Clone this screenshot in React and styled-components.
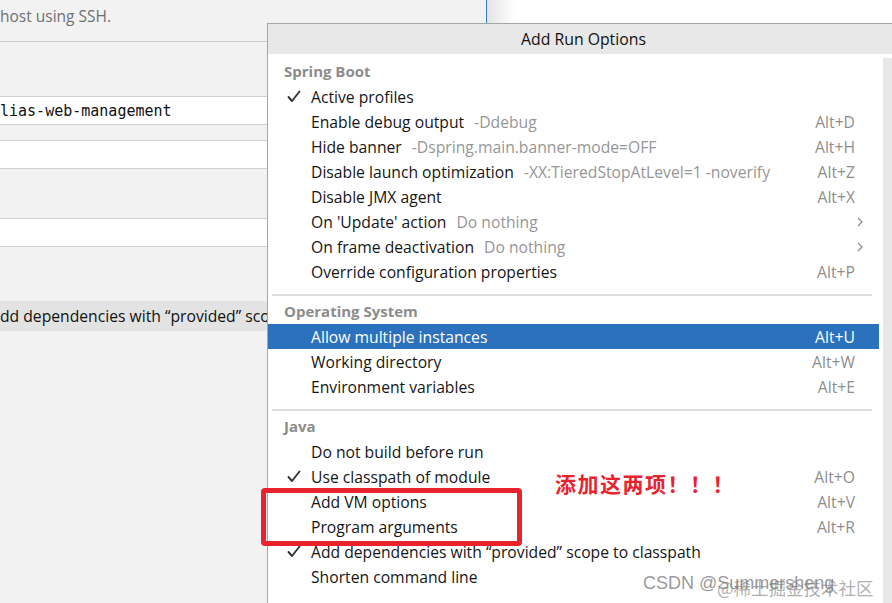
import React from "react";
import styled, { createGlobalStyle } from "styled-components";

const GlobalStyle = createGlobalStyle`
  html, body {
    margin: 0;
    padding: 0;
  }
  body {
    width: 892px;
    height: 603px;
    overflow: hidden;
    font-family: "Open Sans", "Noto Sans CJK SC", sans-serif;
    color: #161616;
  }
`;

const Stage = styled.div`
  position: relative;
  width: 892px;
  height: 603px;
  display: flex;
  overflow: hidden;
`;

const SettingsPanel = styled.div`
  width: 486px;
  flex-shrink: 0;
  background: #f2f2f2;
  border-right: 1px solid #3d7fc4;
  display: flex;
  flex-direction: column;
`;

const Backdrop = styled.div`
  flex: 1;
  background: linear-gradient(to right, #e4e4e4, #ffffff 28px);
`;

const PanelHint = styled.div`
  margin-top: 6px;
  height: 20px;
  line-height: 20px;
  font-size: 15.5px;
  color: #707070;
`;

const PanelRule = styled.div`
  margin-top: ${(p) => p.$top}px;
  height: 1px;
  background: #cacaca;
`;

const Field = styled.div`
  margin-top: ${(p) => p.$top}px;
  height: 27px;
  background: #ffffff;
  border-top: 1px solid #d0d0d0;
  border-bottom: 1px solid #d0d0d0;
  display: flex;
  align-items: center;
  font-family: ${(p) => (p.$mono ? '"DejaVu Sans Mono", monospace' : "inherit")};
  font-size: 15px;
  color: #111;
  white-space: nowrap;
`;

const PanelRow = styled.div`
  margin-top: ${(p) => p.$top}px;
  height: 30px;
  background: #e3e3e3;
  display: flex;
  align-items: center;
  font-size: 15.7px;
  white-space: nowrap;
  color: #111;
`;

const ClippedText = styled.span`
  width: 267px;
  overflow: hidden;
`;

const Popup = styled.div`
  position: absolute;
  left: 267px;
  top: 23px;
  width: 633px;
  bottom: -20px;
  background: #ffffff;
  border: 1px solid #a6a6a6;
  display: flex;
  flex-direction: column;
  box-sizing: border-box;
`;

const PopupTitle = styled.div`
  height: 30px;
  line-height: 30px;
  background: #e8e8e8;
  text-align: center;
  font-size: 15.8px;
  color: #111;
`;

const PopupBody = styled.div`
  flex: 1;
  display: flex;
`;

const OptionList = styled.div`
  flex: 1;
  padding: 4px 4px 0 0;
`;

const Scrollbar = styled.div`
  width: 16px;
  margin-top: 4px;
  background: #e8e8e8;
`;

const SectionTitle = styled.div`
  height: 26px;
  display: flex;
  align-items: center;
  padding-left: 16px;
  font-size: 15px;
  font-weight: 700;
  color: #8c8c8c;
`;

const Separator = styled.div`
  margin: 10px 7px 2px 4px;
  height: 2px;
  background: #dedede;
`;

const Option = styled.div`
  height: 25px;
  display: flex;
  align-items: center;
  padding: 0 16px 0 19px;
  font-size: 15.7px;
  white-space: nowrap;
  background: ${(p) => (p.$selected ? "#2c71bd" : "transparent")};
  color: ${(p) => (p.$selected ? "#ffffff" : "#161616")};
`;

const CheckSlot = styled.span`
  width: 24px;
  display: flex;
  align-items: center;
`;

const Hint = styled.span`
  margin-left: 10px;
  color: #969696;
`;

const Shortcut = styled.span`
  margin-left: auto;
  color: ${(p) => (p.$selected ? "#ffffff" : "#8e8e8e")};
`;

const ChevronSlot = styled.span`
  width: 8px;
  display: flex;
  justify-content: flex-end;
`;

const Callout = styled.div`
  position: absolute;
  left: 261px;
  top: 488px;
  width: 261px;
  height: 58px;
  border: 5px solid #e8232c;
  border-radius: 4px;
  box-sizing: border-box;
`;

const CalloutNote = styled.div`
  position: absolute;
  left: 555px;
  top: 468px;
  font-family: "Noto Sans CJK SC", sans-serif;
  font-size: 21px;
  font-weight: 700;
  color: #e8232c;
  letter-spacing: 1.5px;
`;

const Watermark = styled.div`
  position: absolute;
  left: 643px;
  top: 573px;
  font-family: "Liberation Sans", sans-serif;
  font-size: 18px;
  color: rgba(120, 120, 120, 0.75);
  white-space: nowrap;
`;

const WatermarkOverlay = styled.span`
  position: absolute;
  left: 74px;
  top: 2px;
  font-family: "Noto Sans CJK SC", sans-serif;
  font-size: 17.5px;
  color: rgba(120, 120, 120, 0.6);
`;

const Check = ({ color }) => (
  <svg width="14" height="13" viewBox="0 0 14 13">
    <path d="M1.5 7 L5 11 L12.5 1.5" fill="none" stroke={color} strokeWidth="1.9" strokeLinecap="round" strokeLinejoin="round" />
  </svg>
);

const Chevron = () => (
  <svg width="6" height="10" viewBox="0 0 6 10">
    <path d="M1 1 L5 5 L1 9" fill="none" stroke="#8a8a8a" strokeWidth="1.2" />
  </svg>
);

const sections = [
  {
    title: "Spring Boot",
    items: [
      { label: "Active profiles", checked: true },
      { label: "Enable debug output", hint: "-Ddebug", key: "Alt+D" },
      { label: "Hide banner", hint: "-Dspring.main.banner-mode=OFF", key: "Alt+H" },
      { label: "Disable launch optimization", hint: "-XX:TieredStopAtLevel=1 -noverify", key: "Alt+Z" },
      { label: "Disable JMX agent", key: "Alt+X" },
      { label: "On 'Update' action", hint: "Do nothing", submenu: true },
      { label: "On frame deactivation", hint: "Do nothing", submenu: true },
      { label: "Override configuration properties", key: "Alt+P" },
    ],
  },
  {
    title: "Operating System",
    items: [
      { label: "Allow multiple instances", key: "Alt+U", selected: true },
      { label: "Working directory", key: "Alt+W" },
      { label: "Environment variables", key: "Alt+E" },
    ],
  },
  {
    title: "Java",
    items: [
      { label: "Do not build before run" },
      { label: "Use classpath of module", checked: true, key: "Alt+O" },
      { label: "Add VM options", key: "Alt+V" },
      { label: "Program arguments", key: "Alt+R" },
      { label: "Add dependencies with \u201cprovided\u201d scope to classpath", checked: true },
      { label: "Shorten command line" },
    ],
  },
];

const App = () => (
  <>
    <GlobalStyle />
    <Stage>
      <SettingsPanel>
        <PanelHint>host using SSH.</PanelHint>
        <PanelRule $top={15} />
        <Field $top={54} $mono>lias-web-management</Field>
        <Field $top={15} />
        <Field $top={49} />
        <PanelRow $top={54}>
          <ClippedText>dd dependencies with &ldquo;provided&rdquo; scope to classpath</ClippedText>
        </PanelRow>
      </SettingsPanel>
      <Backdrop />

      <Popup>
        <PopupTitle>Add Run Options</PopupTitle>
        <PopupBody>
          <OptionList>
            {sections.map((section, i) => (
              <React.Fragment key={section.title}>
                {i > 0 && <Separator />}
                <SectionTitle>{section.title}</SectionTitle>
                {section.items.map((item) => (
                  <Option key={item.label} $selected={item.selected}>
                    <CheckSlot>{item.checked && <Check color="#333" />}</CheckSlot>
                    <span>{item.label}</span>
                    {item.hint && <Hint>{item.hint}</Hint>}
                    <Shortcut $selected={item.selected}>{item.key}</Shortcut>
                    <ChevronSlot>{item.submenu && <Chevron />}</ChevronSlot>
                  </Option>
                ))}
              </React.Fragment>
            ))}
          </OptionList>
          <Scrollbar />
        </PopupBody>
      </Popup>

      <Callout />
      <CalloutNote>添加这两项！！！</CalloutNote>
      <Watermark>
        CSDN @Summersheng
        <WatermarkOverlay>@稀土掘金技术社区</WatermarkOverlay>
      </Watermark>
    </Stage>
  </>
);

export default App;
